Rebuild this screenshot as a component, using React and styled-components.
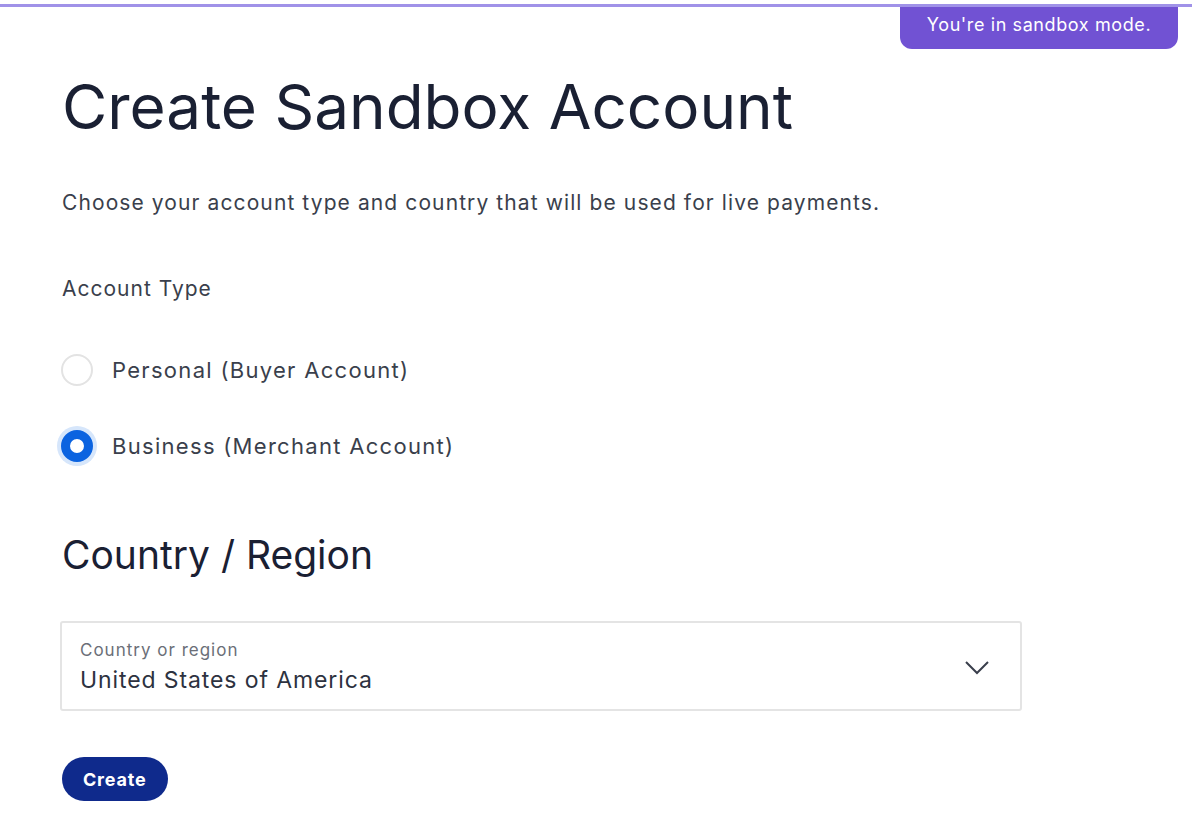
import React from 'react';
import styled, { createGlobalStyle } from 'styled-components';

const Global = createGlobalStyle`
  html, body { margin: 0; padding: 0; background: #fff; }
  body { font-family: Inter, "Noto Sans", Arial, sans-serif; color: #1b2236; }
`;

const Page = styled.div`
  position: relative;
  min-height: 829px;
  border-top: 3px solid #a092e8;
  margin-top: 4px;
`;

const Badge = styled.div`
  position: absolute;
  top: 0;
  right: 14px;
  width: 278px;
  height: 42px;
  background: #7152d3;
  color: #fff;
  font-size: 18px;
  letter-spacing: 0.6px;
  border-radius: 0 0 12px 12px;
  display: flex;
  align-items: center;
  justify-content: center;
  padding-bottom: 8px;
  box-sizing: border-box;
`;

const Content = styled.main`
  padding: 64px 0 0 62px;
  display: flex;
  flex-direction: column;
`;

const Title = styled.h1`
  margin: 0;
  font-size: 62px;
  font-weight: 400;
  letter-spacing: 0;
  line-height: 72px;
  color: #1a2033;
`;

const Lead = styled.p`
  margin: 47px 0 0;
  font-size: 21px;
  color: #3a3f4c;
  letter-spacing: 1.1px;
`;

const FieldLabel = styled.div`
  margin-top: 61px;
  font-size: 21px;
  color: #3a3f4c;
  letter-spacing: 1px;
`;

const Options = styled.div`
  margin-top: 53px;
  display: flex;
  flex-direction: column;
  gap: 44px;
`;

const Option = styled.label`
  display: flex;
  align-items: center;
  gap: 19px;
  font-size: 22px;
  color: #3a3f4c;
  letter-spacing: 1.3px;
`;

const Radio = styled.span`
  width: 32px;
  height: 32px;
  border-radius: 50%;
  box-sizing: border-box;
  margin-left: -1px;
  border: ${p => (p.checked ? '9px solid #0b63e0' : '2px solid #e3e3e3')};
  background: #fff;
  box-shadow: ${p => (p.checked ? '0 0 0 4px #d6e6fb' : 'none')};
`;

const Heading = styled.h2`
  margin: 69px 0 0;
  font-size: 39px;
  font-weight: 400;
  color: #1a2033;
  letter-spacing: 0;
`;

const Select = styled.div`
  margin-top: 43px;
  margin-left: -2px;
  width: 962px;
  height: 90px;
  box-sizing: border-box;
  border: 2px solid #e4e4e4;
  border-radius: 3px;
  display: flex;
  align-items: center;
  justify-content: space-between;
  padding: 2px 30px 0 18px;
`;

const SelectText = styled.div`
  display: flex;
  flex-direction: column;
  gap: 6px;
`;

const Small = styled.span`
  font-size: 17px;
  color: #6b6f78;
  letter-spacing: 1px;
`;

const Value = styled.span`
  font-size: 23px;
  color: #2d3240;
  letter-spacing: 0.9px;
`;

const Button = styled.button`
  margin-top: 46px;
  align-self: flex-start;
  height: 44px;
  padding: 0 21px;
  border: none;
  border-radius: 22px;
  background: #0f2a8c;
  color: #fff;
  font-family: inherit;
  font-size: 18px;
  letter-spacing: 0.8px;
  font-weight: 700;
`;

export default function App() {
  return (
    <>
      <Global />
      <Page>
        <Badge>You're in sandbox mode.</Badge>
        <Content>
          <Title>Create Sandbox Account</Title>
          <Lead>Choose your account type and country that will be used for live payments.</Lead>
          <FieldLabel>Account Type</FieldLabel>
          <Options>
            <Option><Radio />Personal (Buyer Account)</Option>
            <Option><Radio checked />Business (Merchant Account)</Option>
          </Options>
          <Heading>Country / Region</Heading>
          <Select>
            <SelectText>
              <Small>Country or region</Small>
              <Value>United States of America</Value>
            </SelectText>
            <svg width="26" height="16" viewBox="0 0 26 16" fill="none">
              <path d="M2 3l11 11L24 3" stroke="#3a3f4c" strokeWidth="2" />
            </svg>
          </Select>
          <Button>Create</Button>
        </Content>
      </Page>
    </>
  );
}
